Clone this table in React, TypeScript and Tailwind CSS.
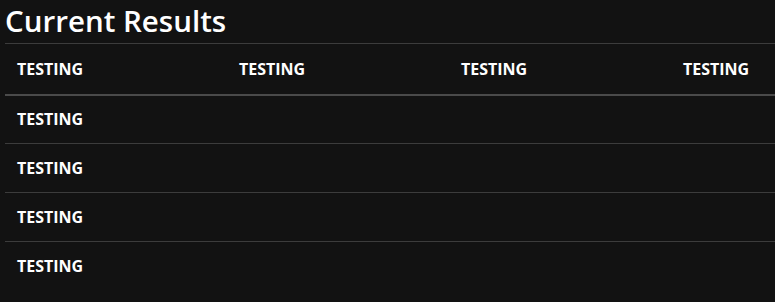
export default function App() {
  const rows = [0, 1, 2, 3];
  return (
    <div
      className="min-h-[302px] w-[775px] overflow-hidden bg-[#121212] text-white"
      style={{ fontFamily: '"Open Sans", "Noto Sans", sans-serif' }}
    >
      <div className="pl-[5px]">
        <h2 className="mb-[3px] pt-[1px] text-[29.5px] font-semibold leading-[39px] text-white">Current Results</h2>
        <table className="w-[888px] border-collapse text-[16px] font-bold uppercase">
          <thead>
            <tr className="border-t border-b-2 border-t-[#3c3c3c] border-b-[#4a4a4a]">
              {["Testing", "Testing", "Testing", "Testing"].map((t, i) => (
                <th key={i} className="h-[51px] w-[222px] px-[12px] text-left align-middle font-bold">
                  {t}
                </th>
              ))}
            </tr>
          </thead>
          <tbody>
            {rows.map((r) => (
              <tr key={r} className={r < 3 ? "border-b border-b-[#3c3c3c]" : ""}>
                <td className="h-[49px] px-[12px] align-middle">Testing</td>
                <td className="h-[49px] px-[12px]"></td>
                <td className="h-[49px] px-[12px]"></td>
                <td className="h-[49px] px-[12px]"></td>
              </tr>
            ))}
          </tbody>
        </table>
      </div>
    </div>
  );
}
